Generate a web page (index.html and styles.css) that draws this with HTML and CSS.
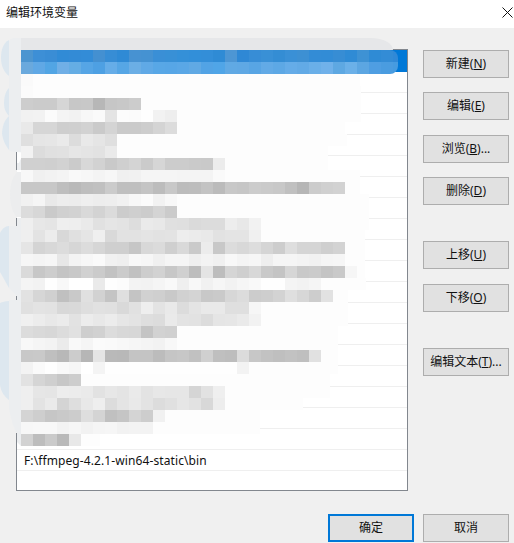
FILE: index.html
```html
<!DOCTYPE html>
<html lang="zh-CN">
<head>
  <meta charset="UTF-8" />
  <title>编辑环境变量</title>
  <link rel="stylesheet" href="styles.css">
</head>
<body>
  <header class="titlebar">
    <span class="title">编辑环境变量</span>
    <svg class="close" width="11" height="11" viewBox="0 0 11 11">
      <path d="M0.5 0.5 L10.5 10.5 M10.5 0.5 L0.5 10.5" stroke="#111" stroke-width="1" fill="none" />
    </svg>
  </header>

  <main class="content">
    <div class="list">
      <ul class="rows">
        <li class="row selected"></li>
        <li class="row"></li><li class="row"></li><li class="row"></li><li class="row"></li>
        <li class="row"></li><li class="row"></li><li class="row"></li><li class="row"></li>
        <li class="row"></li><li class="row"></li><li class="row"></li><li class="row"></li>
        <li class="row"></li><li class="row"></li><li class="row"></li><li class="row"></li>
        <li class="row"></li><li class="row"></li>
        <li class="row">F:\ffmpeg-4.2.1-win64-static\bin</li>
      </ul>
    </div>
    <div class="actions">
      <button class="btn">新建(<u>N</u>)</button>
      <button class="btn">编辑(<u>E</u>)</button>
      <button class="btn">浏览(<u>B</u>)...</button>
      <button class="btn">删除(<u>D</u>)</button>
      <button class="btn far">上移(<u>U</u>)</button>
      <button class="btn">下移(<u>O</u>)</button>
      <button class="btn far">编辑文本(<u>T</u>)...</button>
    </div>
  </main>

  <footer class="footer">
    <button class="btn default">确定</button>
    <button class="btn">取消</button>
  </footer>

  <!-- the blurred-out smear lying over the list's left edge -->
  <svg class="smudge" width="30" height="460" viewBox="0 0 30 460">
    <path fill="#f0f0f0" d="M0 38H17V81H0Z M0 84H17V152H0Z M0 170H17V218H0Z M0 226H17V296H0Z M0 300H17V433H0Z" />
    <path fill="#eceef0" d="M21 38H15C11 38 9 40 9 42V150C11 152 16 152 17 152V170H21Z" />
    <path fill="#ecedee" d="M17 172C13 176 10 184 10 194C10 206 13 214 17 217H21V172Z" />
    <path fill="#eceef0" d="M17 218V226H9V288L17 296V300H9V408C11 420 14 428 17 433V442L21 446V218Z" />
    <path fill="#dde7ef" d="M9 40C3 43 1 50 1 58C1 66 4 72 9 76Z" />
    <path fill="#dde7ef" d="M9 88C5 92 4 98 4 104C4 109 6 113 9 116Z" />
    <path fill="#dde7ef" d="M9 116C4 120 2 128 2 134C3 141 6 146 9 150Z" />
    <path fill="#dde7ef" d="M9 226C5 226 2 229 0 233V272L9 288Z" />
    <path fill="#dde7ef" d="M9 301C5 301 2 302 0 303V385C1 392 4 396 9 400Z" />
    <path fill="#fff" d="M17 152L31 153L22 156L19 163L17 163Z" />
  </svg>

  <div class="mosaic" id="mosaic"></div>

  <script src="mosaic.js"></script>
</body>
</html>
```

FILE: styles.css
```css
:root {
  --bg: #f0f0f0;
  --btn: #e1e1e1;
  --btn-border: #adadad;
  --accent: #0078d7;
  --line: #efefef;
}

* {
  margin: 0;
  padding: 0;
  box-sizing: border-box;
}

body {
  width: 514px;
  height: 543px;
  overflow: hidden;
  position: relative;
  background: var(--bg);
  color: #111;
  font-family: "Noto Sans", "Noto Sans CJK SC", sans-serif;
  font-size: 12px;
}

.titlebar {
  height: 28px;
  background: #fff;
  display: flex;
  justify-content: space-between;
  align-items: center;
  padding: 0 1px 0 6px;
}

.title {
  line-height: 24px;
  margin-bottom: 3px;
}

.close {
  margin-bottom: 4px;
}

.content {
  display: flex;
  gap: 15px;
  padding: 21px 5px 0 16px;
}

.list {
  width: 392px;
  height: 442px;
  background: #fff;
  border: 1px solid #82878e;
  position: relative;
}

.rows {
  list-style: none;
  padding-top: 1px;
}

.row {
  height: 21px;
  line-height: 22px;
  padding-left: 7px;
  letter-spacing: 0.1px;
  border-bottom: 1px solid var(--line);
}

.row.selected {
  height: 22px;
  margin-top: -1px;
  background: var(--accent);
  border-bottom: none;
}

.actions {
  width: 86px;
  display: flex;
  flex-direction: column;
  gap: 14.34px;
  padding-top: 1px;
}

.btn {
  width: 86px;
  height: 28px;
  flex: none;
  padding-bottom: 2px;
  background: var(--btn);
  border: 1px solid var(--btn-border);
  color: #111;
  font: inherit;
}

.btn.far {
  margin-top: 22px;
}

.btn.default {
  border: 2px solid var(--accent);
}

.footer {
  display: flex;
  justify-content: flex-end;
  gap: 9px;
  padding: 23px 5px 0 0;
}

.smudge {
  position: absolute;
  left: 0;
  top: 0;
}

/* pixelated cover over the paths, cells are 12px */
.mosaic {
  position: absolute;
  left: 21px;
  top: 38px;
  width: 380px;
}

.m-row {
  display: flex;
  height: 12px;
}

.m-row.band {
  width: 372px;
  border-top-right-radius: 22px 12px;
  background: #e6e7e9;
}

.m-row.blue {
  width: 377px;
  overflow: hidden;
}

.m-row.blue.last {
  border-bottom-right-radius: 8px;
}

.m-row.blue.first {
  border-top-right-radius: 8px;
}

.cell {
  width: 12px;
  flex: none;
}

.smear {
  background: #fdfdfd;
  flex: none;
}
```

FILE: mosaic.js
```js
// each row: where the white smear ends (page x, 0 = no smear) and its cells.
// two digit cells are greys, longer ones are full colours.
const rows = [
  [0, "", "band"],
  [0, "4c95d0 3d8fd6 3a8dd5 318bd6 338bd6 338cd7 4490d1 378dd5 2f8ad5 4792d2 4592d2 3a8fd6 3890d6 3490d8 328fd9 338ed8 2f8bd5 4d96d4 2f88d5 378dd6 3990d6 348dd4 3a90d6 3d90d3 338cd6 328cd6 378dd4 2f8bd5 3e92d4 2f8bd5 338cd6 3089d7", "blue first"],
  [0, "6aa9dd 60a8e5 52a5e4 70afe6 65ade4 56a5e5 4ea0e3 66ade8 56a6e5 6baee5 60a9e6 58a7e6 57a6e6 5aa7e6 60a9e4 52a3e5 50a5e7 60a9e4 5fa8e4 58a5e4 62aae6 5da8e5 65ace8 62aae6 6aafe8 70b1ea 5ea8e2 6bb0e8 5ca6e2 4f9ee2 4a9ce0 469be0", "blue last"],
  [360, "fa"],
  [361, "fb"],
  [361, "cd cb cb d6 c7 c8 b7 c6 c8 cc"],
  [361, "f1 f2 fb f4 f2 f7 fa e4 fc fb fe f2 ee"],
  [345, "e9 d6 d6 ce cf d2 ca d4 ca ca cd d4 dc"],
  [347, "df e5 e6 ea dc e9 e5 df"],
  [328, "f2 dc e0 e1 e6 e4 e2 ea"],
  [328, "d0 d0 cf d2 cb d8 d2 c9 cf d4 cb d6 cc cc ca c9 ec"],
  [360, "f8 f0 f2 f4 f9 f7 f4 f7 f0 f1 f5 f5 f5 f4 f4 f4 fa"],
  [360, "c7 c7 c7 be b9 be c0 cb bf bf c4 bc c8 bc bd c3 bb c8 c6 cc ca c8 c0 b6 cc d0 d2"],
  [369, "f1 f5 e9 ed ec ef ed ee f1 f7 fb f2 f8"],
  [369, "dc d7 ca d0 d2 d9 d3 db cc cf cc d4 cb"],
  [369, "ef e7 e5 ef ee ea e1 e5 e3 dd ea e8 e0 df da dc dc ed e8 f2"],
  [365, "ef e3 ec d8 e0 e5 ef d9 e2 e2 e4 e2 e3 ed eb e9 e2 e4 e4 f0"],
  [365, "e5 d4 d8 dc d6 dc d6 cf cf c6 d8 db cf d9 ca ec c8 dc d8 dd d5 cd de d5 d5 cf d3"],
  [365, "f6 f4 f6 e7 f3 f7 fa f1 ef f8 f6 f0 f5 f5 ef f3 f0 f8 f4 f6 ee f5 f5 f3 f1 f5 f6"],
  [365, "da c7 cd c4 c8 d1 cb c2 cb c1 cd d2 c7 d0 bd e4 bd d5 cf d8 c9 c4 d6 c9 cb c4 c9 f6"],
  [366, "f4 f2 fe f8 ff ff ea fe fc f3 f2 f5 f9 ef f8 f1 f6 f2 f6 f9 fe fe f4 f2 f5"],
  [348, "e2 d6 d0 c0 c9 e0 d2 c4 df c4 d1 cf c9 d1 d4 c8 ca d7 dc cc ce d3 df d7 cd e2"],
  [348, "e0 e3 e2 d8 d9 de e1 e0 d9 e1 ee e3 e9 dc e4 e9 e9 df df f6"],
  [348, "f0 ec e8 eb e2 ec e8 ec e6 e3 de dc ea e3 e2 dc e5 e6 ea f2"],
  [338, "dc d9 d7 dc e1 ce d1 dc d8 d7 c4 d2 d0"],
  [338, "f8 f5 f3 eb f9 f5 fb fa f8 f6 f4 f2 f8"],
  [338, "c8 c9 bf b8 cc b6 e5 b9 b8 c4 c4 bc c5 c7 c1 d0 bf bd dc c7 c2 bf c2 bf e1"],
  [338, "f3 fa fe f9 f6 ff f4 fe fe fe fe fe fe fe fe fe fe fe f3"],
  [330, "e2 d5 cf c7 cd"],
  [330, "ef e6 e5 ed ec ea e2 e7 e4 ea e3 e7 e6 e6 d5 e2 ef"],
  [303, "ef e3 ea d4 de e8 ee dc e4 e9 e3 dc e0 e6 e2 d8 ed"],
  [260, "d4 ce c6 c9 cc de d4 c0 c5 d4 cd f1"],
  [260, "f7 f8 f8 f3 f6 f2 f5 f6 f2 f3 f3"],
  [100, "d2 bd ca b9 e8"]
];

const mosaic = document.getElementById("mosaic");

rows.forEach(([end, cells, cls]) => {
  const row = document.createElement("div");
  row.className = "m-row " + (cls || "");
  const list = cells ? cells.split(" ") : [];

  list.forEach((c) => {
    const cell = document.createElement("span");
    cell.className = "cell";
    cell.style.background = "#" + (c.length === 2 ? c + c + c : c);
    row.appendChild(cell);
  });

  if (end) {
    const smear = document.createElement("span");
    smear.className = "smear";
    smear.style.width = end - 21 - list.length * 12 + "px";
    row.appendChild(smear);
  }
  mosaic.appendChild(row);
});
```
